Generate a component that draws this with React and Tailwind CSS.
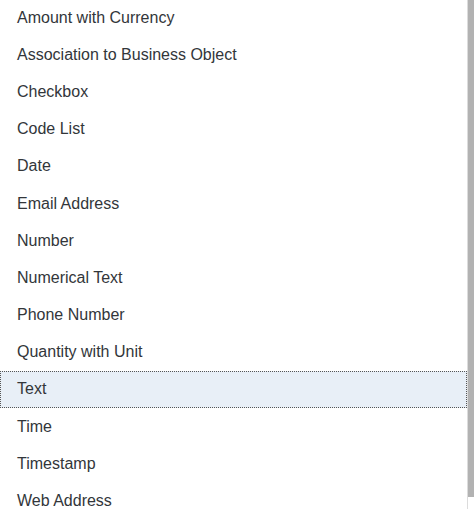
import React from 'react';

const items = [
  'Amount with Currency',
  'Association to Business Object',
  'Checkbox',
  'Code List',
  'Date',
  'Email Address',
  'Number',
  'Numerical Text',
  'Phone Number',
  'Quantity with Unit',
  'Text',
  'Time',
  'Timestamp',
  'Web Address',
];

export default function App() {
  const selected = 'Text';

  return (
    <div className="w-[474px] h-[509px] bg-white overflow-hidden flex" style={{ fontFamily: '"Liberation Sans", Arial, sans-serif' }}>
      {/* Liste */}
      <ul className="flex-1 -mt-[1px]">
        {items.map((item) => (
          <li
            key={item}
            className={
              item === selected
                ? 'h-[37.2px] flex items-center pl-[16px] text-[16px] text-[#32363a] bg-[#e8eff7] border border-dotted border-[#555]'
                : 'h-[37.2px] flex items-center pl-[16px] text-[16px] text-[#32363a] border border-transparent'
            }
          >
            {item}
          </li>
        ))}
      </ul>

      {/* Kaydırma çubuğu */}
      <div className="w-[7px] flex">
        <div className="w-[1px] bg-[#dcdcdc]" />
        <div className="flex-1 bg-[#b2b2b2] mb-[12px]" />
      </div>
    </div>
  );
}
